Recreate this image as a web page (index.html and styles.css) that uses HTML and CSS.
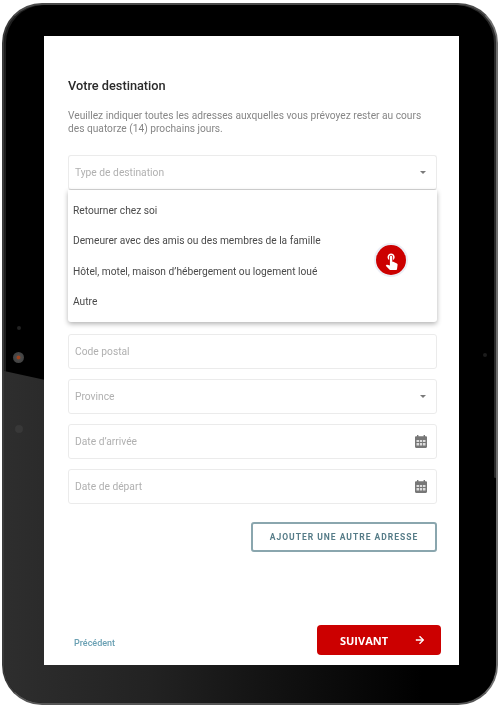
FILE: index.html
```html
<!DOCTYPE html>
<html lang="fr">
<head>
  <meta charset="UTF-8">
  <meta name="viewport" content="width=device-width, initial-scale=1.0">
  <title>Votre destination</title>
  <link rel="stylesheet" href="styles.css">
</head>
<body>
  <div class="tablet">
    <span class="dot dot--top"></span>
    <span class="dot dot--camera"></span>
    <span class="dot dot--low"></span>
    <span class="dot dot--right"></span>

    <div class="screen">
      <h2 class="title">Votre destination</h2>
      <p class="intro">Veuillez indiquer toutes les adresses auxquelles vous prévoyez rester au cours des quatorze (14) prochains jours.</p>

      <div class="form">
        <div class="field field--open">
          <span>Type de destination</span>
          <span class="caret"></span>
        </div>
        <div class="menu">
          <div class="menu__item">Retourner chez soi</div>
          <div class="menu__item">Demeurer avec des amis ou des membres de la famille</div>
          <div class="menu__item">Hôtel, motel, maison d’hébergement ou logement loué</div>
          <div class="menu__item">Autre</div>
          <div class="touch">
            <svg viewBox="0 0 24 24" width="19" height="19"><path fill="#fff" d="M9 11.24V7.5C9 6.12 10.12 5 11.5 5S14 6.12 14 7.5v3.74c1.21-.81 2-2.18 2-3.74C16 5.01 13.99 3 11.5 3S7 5.01 7 7.5c0 1.56.79 2.93 2 3.74zm9.84 4.63l-4.54-2.26c-.17-.07-.35-.11-.54-.11H13v-6c0-.83-.67-1.5-1.5-1.5S10 6.67 10 7.5v10.74l-3.43-.72c-.08-.01-.15-.03-.24-.03-.31 0-.59.13-.79.33l-.79.8 4.94 4.94c.27.27.65.44 1.06.44h6.79c.75 0 1.33-.55 1.44-1.28l.75-5.27c.01-.07.02-.14.02-.2 0-.62-.38-1.16-.91-1.38z"/></svg>
          </div>
        </div>

        <div class="field"><span>Code postal</span></div>
        <div class="field">
          <span>Province</span>
          <span class="caret"></span>
        </div>
        <div class="field">
          <span>Date d’arrivée</span>
          <svg class="cal" viewBox="0 0 12 13" width="12" height="13"><path fill="#777" d="M2 0h1.4v1.2h5.2V0H10v1.2h.8c.7 0 1.2.5 1.2 1.2v9.4c0 .7-.5 1.2-1.2 1.2H1.2C.5 13 0 12.500 0 11.800V2.400c0-.7.5-1.200 1.200-1.200H2z"/><path fill="#ddd" d="M1.500 5h2.500v2H1.500zM4.800 5h2.400v2H4.800zM8 5h2.500v2H8zM1.500 8h2.500v2.500H1.500zM4.800 8h2.400v2.500H4.800zM8 8h2.500v2.500H8z"/></svg>
        </div>
        <div class="field">
          <span>Date de départ</span>
          <svg class="cal" viewBox="0 0 12 13" width="12" height="13"><path fill="#777" d="M2 0h1.4v1.2h5.2V0H10v1.2h.8c.7 0 1.2.5 1.2 1.2v9.4c0 .7-.5 1.2-1.2 1.2H1.2C.5 13 0 12.500 0 11.800V2.400c0-.7.5-1.200 1.200-1.200H2z"/><path fill="#ddd" d="M1.500 5h2.500v2H1.500zM4.800 5h2.400v2H4.800zM8 5h2.500v2H8zM1.500 8h2.500v2.500H1.500zM4.800 8h2.400v2.500H4.800zM8 8h2.500v2.500H8z"/></svg>
        </div>
      </div>

      <div class="add">
        <button class="btn-outline">AJOUTER UNE AUTRE ADRESSE</button>
      </div>

      <div class="footer">
        <a class="prev">Précédent</a>
        <button class="next">
          <span>SUIVANT</span>
          <svg viewBox="0 0 24 24" width="12" height="12"><path fill="#fff" stroke="#fff" stroke-width="1" d="M12 4l-1.410 1.410L16.170 11H4v2h12.170l-5.580 5.590L12 20l8-8z"/></svg>
        </button>
      </div>
    </div>
  </div>
</body>
</html>
```

FILE: styles.css
```css
* {
  margin: 0;
  box-sizing: border-box;
}

html,
body {
  width: 500px;
  height: 708px;
  background-color: #fff;
  overflow: hidden;
}

body {
  padding: 3px 2px;
  font-family: "Roboto", "Liberation Sans", sans-serif;
}

.tablet {
  position: relative;
  width: 496px;
  height: 702px;
  padding: 31px 37px 38px 40px;
  border: 2px solid #3a3a3a;
  border-right-color: #6e6e6e;
  border-top-color: #4a4a4a;
  border-bottom-color: #555;
  border-radius: 40px;
  background-color: #000;
  box-shadow: inset -2px 0 0 #2a2a2a, inset 2px 0 0 #1e1e1e;
  filter: blur(.5px);
  overflow: hidden;
}

/* reflet sur le bas de la tablette */
.tablet::before {
  content: "";
  position: absolute;
  left: 0;
  top: 0;
  width: 100%;
  height: 100%;
  background: linear-gradient(to right, #2e2e2e, #222 30%, #151515 50%, #000 85%);
  clip-path: polygon(0 366px, 100% 473px, 100% 100%, 0 100%);
}

.dot {
  position: absolute;
  border-radius: 50%;
}

.dot--top {
  left: 13px;
  top: 321px;
  width: 4px;
  height: 4px;
  background-color: #222;
}

.dot--camera {
  left: 9px;
  top: 347px;
  width: 11px;
  height: 11px;
  background: radial-gradient(circle, #a0421c 0, #a0421c 18%, #4a4a4a 30%, #3a3a3a 100%);
}

.dot--low {
  left: 11px;
  top: 420px;
  width: 8px;
  height: 8px;
  background-color: #383838;
}

.dot--right {
  left: 479px;
  top: 348px;
  width: 4px;
  height: 4px;
  background-color: #1c1c1c;
}

.screen {
  position: relative;
  display: flex;
  flex-direction: column;
  height: 100%;
  padding: 42px 20px 10px 24px;
  background-color: #fff;
}

.title {
  font-size: 12.750px;
  line-height: 16px;
  font-weight: 500;
  color: #2a2a2a;
}

.intro {
  margin-top: 15px;
  font-size: 10.200px;
  line-height: 13px;
  color: #868686;
  width: 369px;
}

.form {
  margin-top: 20px;
  width: 369px;
}

.field {
  display: flex;
  justify-content: space-between;
  align-items: center;
  height: 35px;
  margin-bottom: 10px;
  padding: 0 10px 0 6px;
  border: 1px solid #ebebeb;
  border-radius: 3px;
  font-size: 10.250px;
  color: #b0b0b0;
}

.field--open {
  margin-bottom: 0;
  border-bottom-color: #d5d5d5;
}

.caret {
  width: 0;
  height: 0;
  border-left: 3.500px solid transparent;
  border-right: 3.500px solid transparent;
  border-top: 3.500px solid #7a7a7a;
}

.cal {
  margin-right: -1px;
}

.menu {
  position: relative;
  height: 132px;
  margin-bottom: 12px;
  padding: 6px 5px;
  background-color: #fff;
  border-radius: 0 0 3px 3px;
  box-shadow: 0 2px 5px rgba(0, 0, 0, .3);
}

.menu__item {
  height: 30.300px;
  line-height: 30.300px;
  font-size: 10.200px;
  color: #4a4a4a;
}

.touch {
  position: absolute;
  left: 306px;
  top: 53px;
  display: flex;
  justify-content: center;
  align-items: center;
  width: 30px;
  height: 30px;
  background-color: #cc0000;
  border: 2px solid #eceef5;
  border-radius: 50%;
  box-sizing: content-box;
}

.add {
  display: flex;
  justify-content: flex-end;
  margin-top: 8px;
  width: 369px;
}

.btn-outline {
  width: 186px;
  height: 30px;
  background-color: #fff;
  border: 2px solid #8aa6ae;
  border-radius: 3px;
  font-family: inherit;
  font-size: 8.500px;
  font-weight: 700;
  letter-spacing: 1px;
  color: #567c88;
}

.footer {
  display: flex;
  justify-content: space-between;
  align-items: center;
  margin-top: auto;
  padding-left: 6px;
  width: 373px;
}

.prev {
  padding-top: 5px;
  font-size: 9px;
  font-weight: 500;
  color: #6aa0b3;
}

.next {
  display: flex;
  justify-content: space-between;
  align-items: center;
  width: 124px;
  height: 30px;
  padding: 0 15px 0 23px;
  background-color: #cc0000;
  border: 0;
  border-radius: 4px;
  font-family: "Open Sans", sans-serif;
  font-size: 11px;
  font-weight: 700;
  color: #fff;
}
```
